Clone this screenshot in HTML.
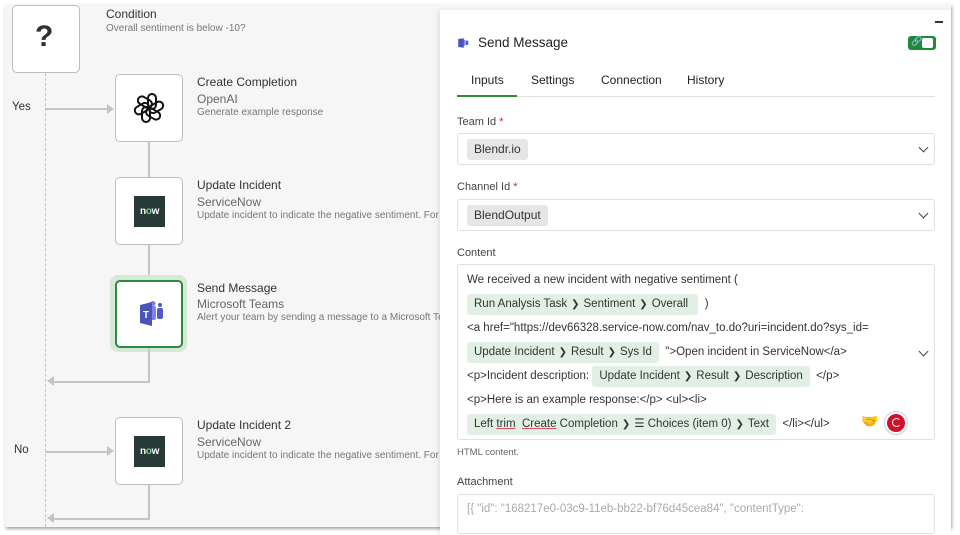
<!DOCTYPE html>
<html><head><meta charset="utf-8"><style>
*{margin:0;padding:0;box-sizing:border-box}
body{width:960px;height:535px;background:#fff;font-family:"Liberation Sans",sans-serif;position:relative;overflow:hidden;color:#333}
.a{position:absolute;white-space:nowrap}
#canvas{position:absolute;left:5px;top:4px;width:946px;height:523px;background:#f6f6f6;box-shadow:1px 2px 3px rgba(0,0,0,.35);overflow:hidden}
.box{position:absolute;width:68px;height:68px;background:#fff;border:1.5px solid #bdbdbd;border-radius:5px}
.t{font-size:12px;color:#333}
.s{font-size:12px;color:#666}
.d{font-size:10px;color:#777}
.vl{position:absolute;width:1.5px;background:#c4c4c4}
.hl{position:absolute;height:1.5px;background:#c4c4c4}
.now{position:absolute;left:18px;top:18px;width:31px;height:31px;background:#283a38;color:#fff;font-weight:bold;font-size:10px;text-align:center;line-height:31px;letter-spacing:-.3px}
.now b{color:#7fd37f}
#panel{position:absolute;left:440px;top:10px;width:511px;height:525px;background:#fff;box-shadow:-2px 0 4px rgba(0,0,0,.08)}
.lbl{font-size:11px;color:#444}
.inp{position:absolute;left:17px;width:478px;border:1px solid #e0e0e0;border-radius:3px;background:#fff}
.gchip{position:absolute;background:#e6e6e6;border-radius:3px;font-size:12px;color:#333;padding:0 7px;line-height:21px}
.chip{display:inline-block;background:#e2efe4;border-radius:3px;padding:0 7px;line-height:21px;height:21px}
.ln{position:absolute;left:27px;font-size:11.5px;color:#333;line-height:21px}
.gt{color:#333;margin:0 4px;font-size:10px}
.chev{position:absolute;width:7px;height:7px;border-right:1.5px solid #444;border-bottom:1.5px solid #444;transform:rotate(45deg)}
</style></head><body>
<div id="canvas">
  <div class="box" style="left:7px;top:1px;height:68px"><div class="a" style="left:22px;top:14px;font-size:30px;font-weight:bold;color:#2b3137">?</div></div>
  <div class="a t" style="left:101px;top:3px">Condition</div>
  <div class="a d" style="left:101px;top:19px">Overall sentiment is below -10?</div>
  <div class="a" style="left:40px;top:69px;height:454px;border-left:1.5px dashed #c4c4c4"></div>
  <div class="a" style="left:7px;top:97px;font-size:11.5px">Yes</div>
  <div class="hl" style="left:41px;top:104px;width:62px"></div>
  <div class="a" style="left:102px;top:100px;border-left:7px solid #c4c4c4;border-top:5px solid transparent;border-bottom:5px solid transparent"></div>
  <div class="box" style="left:110px;top:70px">
    <svg width="68" height="68" style="position:absolute;left:-1px;top:-1px" viewBox="0 0 68 68"><g transform="translate(34,34)" fill="none" stroke="#111" stroke-width="2">
      <rect x="-1" y="-14" width="8" height="15" rx="4"/>
      <rect x="-1" y="-14" width="8" height="15" rx="4" transform="rotate(60)"/>
      <rect x="-1" y="-14" width="8" height="15" rx="4" transform="rotate(120)"/>
      <rect x="-1" y="-14" width="8" height="15" rx="4" transform="rotate(180)"/>
      <rect x="-1" y="-14" width="8" height="15" rx="4" transform="rotate(240)"/>
      <rect x="-1" y="-14" width="8" height="15" rx="4" transform="rotate(300)"/></g></svg>
  </div>
  <div class="a t" style="left:192px;top:71px">Create Completion</div>
  <div class="a s" style="left:192px;top:88px">OpenAI</div>
  <div class="a d" style="left:192px;top:103px">Generate example response</div>
  <div class="vl" style="left:143px;top:137px;height:36px"></div>
  <div class="box" style="left:110px;top:173px"><div class="now">n<b>o</b>w</div></div>
  <div class="a t" style="left:192px;top:174px">Update Incident</div>
  <div class="a s" style="left:192px;top:191px">ServiceNow</div>
  <div class="a d" style="left:192px;top:206px">Update incident to indicate the negative sentiment. For e</div>
  <div class="vl" style="left:143px;top:240px;height:36px"></div>
  <div class="a" style="left:105px;top:271px;width:77px;height:77px;background:#d6e8d8;border-radius:8px"></div>
  <div class="box" style="left:110px;top:276px;border:2px solid #2e8b3e"><svg width="30" height="30" style="position:absolute;left:18px;top:17px" viewBox="0 0 30 30"><rect x="14" y="7" width="7" height="14" rx="2" fill="#7b83eb"/><circle cx="18" cy="4.5" r="2.5" fill="#7b83eb"/><circle cx="25" cy="6" r="2" fill="#5059c9"/><rect x="22" y="9" width="6" height="11" rx="2" fill="#5059c9"/><path d="M5 6 L17 3 L17 27 L5 24Z" fill="#4b53bc"/><text x="8" y="19" font-size="10" font-weight="bold" fill="#fff" font-family="Liberation Sans">T</text></svg></div>
  <div class="a t" style="left:192px;top:277px">Send Message</div>
  <div class="a s" style="left:192px;top:293px">Microsoft Teams</div>
  <div class="a d" style="left:192px;top:308px">Alert your team by sending a message to a Microsoft Team</div>
  <div class="vl" style="left:143px;top:344px;height:34px"></div>
  <div class="hl" style="left:48px;top:377px;width:97px"></div>
  <div class="a" style="left:42px;top:372px;border-right:7px solid #c4c4c4;border-top:5px solid transparent;border-bottom:5px solid transparent"></div>
  <div class="a" style="left:9px;top:440px;font-size:11.5px">No</div>
  <div class="hl" style="left:41px;top:447px;width:62px"></div>
  <div class="a" style="left:102px;top:442px;border-left:7px solid #c4c4c4;border-top:5px solid transparent;border-bottom:5px solid transparent"></div>
  <div class="box" style="left:110px;top:413px"><div class="now">n<b>o</b>w</div></div>
  <div class="a t" style="left:192px;top:414px">Update Incident 2</div>
  <div class="a s" style="left:192px;top:431px">ServiceNow</div>
  <div class="a d" style="left:192px;top:446px">Update incident to indicate the negative sentiment. For e</div>
  <div class="vl" style="left:143px;top:480px;height:35px"></div>
  <div class="hl" style="left:48px;top:514px;width:97px"></div>
  <div class="a" style="left:42px;top:509px;border-right:7px solid #c4c4c4;border-top:5px solid transparent;border-bottom:5px solid transparent"></div>
</div>

<div id="panel">
  <div class="a" style="left:495px;top:11px;width:8px;height:1.5px;background:#333"></div>
  <svg class="a" style="left:17px;top:27px" width="12" height="12" viewBox="0 0 30 30"><rect x="14" y="7" width="7" height="14" fill="#7b83eb"/><rect x="22" y="9" width="6" height="11" fill="#5059c9"/><path d="M3 5 L17 3 L17 27 L3 25Z" fill="#4b53bc"/></svg>
  <div class="a" style="left:38px;top:25px;font-size:13.5px;color:#222">Send Message</div>
  <div class="a" style="left:468px;top:26px;width:28px;height:14px;background:#1e8a3a;border-radius:3px"><div class="a" style="left:14px;top:2px;width:11px;height:10px;background:#fff;border-radius:2px"></div><div class="a" style="left:3px;top:0;font-size:9px;color:#fff">🔗</div></div>
  <div class="a" style="left:31px;top:63px;font-size:12px;color:#222">Inputs</div>
  <div class="a" style="left:91px;top:63px;font-size:12px;color:#222">Settings</div>
  <div class="a" style="left:161px;top:63px;font-size:12px;color:#222">Connection</div>
  <div class="a" style="left:247px;top:63px;font-size:12px;color:#222">History</div>
  <div class="a" style="left:17px;top:86px;width:478px;height:1px;background:#e0e0e0"></div>
  <div class="a" style="left:17px;top:85px;width:60px;height:2px;background:#2e8b3e"></div>
  <div class="a lbl" style="left:17px;top:106px">Team Id <span style="color:#d22">*</span></div>
  <div class="inp" style="top:123px;height:32px"><div class="gchip" style="left:9px;top:5px">Blendr.io</div><div class="chev" style="left:462px;top:10px"></div></div>
  <div class="a lbl" style="left:17px;top:171px">Channel Id <span style="color:#d22">*</span></div>
  <div class="inp" style="top:189px;height:32px"><div class="gchip" style="left:9px;top:5px">BlendOutput</div><div class="chev" style="left:462px;top:10px"></div></div>
  <div class="a lbl" style="left:17px;top:237px">Content</div>
  <div class="inp" style="top:254px;height:176px">
    <div class="chev" style="left:462px;top:83px"></div>
    <div class="a" style="left:403px;top:148px;font-size:14px">🤝</div>
    <div class="a" style="left:426px;top:146px;width:24px;height:24px;border-radius:50%;border:1px solid #ccd;background:#fff"><div class="a" style="left:2px;top:2px;width:18px;height:18px;border-radius:50%;background:#d0112b"><div class="a" style="left:5px;top:4px;width:9px;height:9px;border-radius:50%;border:1.5px solid #fff;border-right-color:transparent"></div></div></div>
  </div>
  <div class="ln" style="top:260px">We received a new incident with negative sentiment (</div>
  <div class="ln" style="top:284px"><span class="chip">Run Analysis Task<span class="gt">❯</span>Sentiment<span class="gt">❯</span>Overall&nbsp;</span>&nbsp; )</div>
  <div class="ln" style="top:308px">&lt;a href="https://dev66328.service-now.com/nav_to.do?uri=incident.do?sys_id=</div>
  <div class="ln" style="top:332px"><span class="chip">Update Incident<span class="gt">❯</span>Result<span class="gt">❯</span>Sys Id</span>&nbsp; "&gt;Open incident in ServiceNow&lt;/a&gt;</div>
  <div class="ln" style="top:356px">&lt;p&gt;Incident description: <span class="chip">Update Incident<span class="gt">❯</span>Result<span class="gt">❯</span>Description</span>&nbsp; &lt;/p&gt;</div>
  <div class="ln" style="top:380px">&lt;p&gt;Here is an example response:&lt;/p&gt; &lt;ul&gt;&lt;li&gt;</div>
  <div class="ln" style="top:404px"><span class="chip">Left <u style="text-decoration-color:#e05060">trim</u>&nbsp; <u style="text-decoration-color:#e05060">Create</u> Completion<span class="gt">❯</span>☰ Choices (item 0)<span class="gt">❯</span>Text</span>&nbsp; &lt;/li&gt;&lt;/ul&gt;</div>
  <div class="a" style="left:17px;top:437px;font-size:9.5px;color:#666">HTML content.</div>
  <div class="a lbl" style="left:17px;top:466px">Attachment</div>
  <div class="inp" style="top:484px;height:40px"><div class="a" style="left:9px;top:8px;font-size:11.5px;color:#aaa">[{ "id": "168217e0-03c9-11eb-bb22-bf76d45cea84", "contentType":</div></div>
</div>
</body></html>
